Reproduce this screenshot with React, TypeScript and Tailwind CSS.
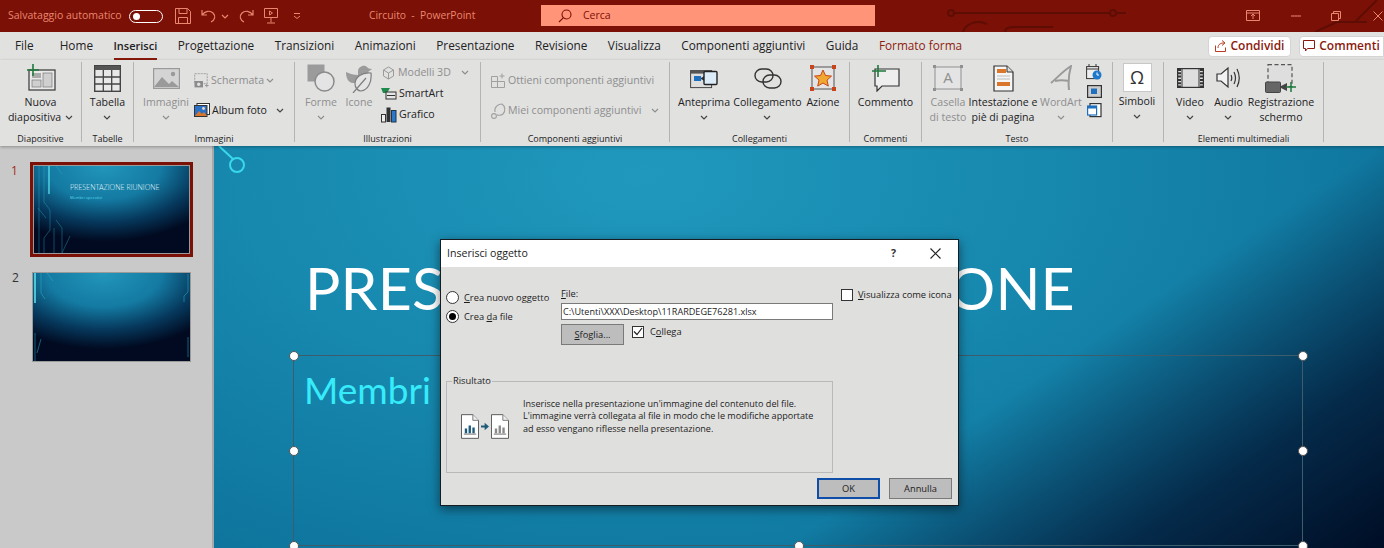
import type { ReactNode } from "react";

const tabs = ["Home", "Inserisci", "Progettazione", "Transizioni", "Animazioni", "Presentazione", "Revisione", "Visualizza", "Componenti aggiuntivi", "Guida"];

function Chevron({ className = "text-[#444]" }: { className?: string }) {
  return (
    <svg width="8" height="5" viewBox="0 0 8 5" className={className} fill="none" stroke="currentColor" strokeWidth="1.2">
      <path d="M1 1l3 3 3-3" />
    </svg>
  );
}

function NewSlideIcon() {
  return (
    <svg width="30" height="28" viewBox="0 0 30 28">
      <rect x="3" y="6" width="26" height="20" fill="#e9e9e9" stroke="#444" strokeWidth="1.3" />
      <rect x="6" y="9" width="9" height="5" fill="#aaa" />
      <rect x="17" y="9" width="9" height="14" fill="#cfcfcf" stroke="#777" strokeWidth=".7" />
      <rect x="6" y="16" width="9" height="7" fill="#cfcfcf" stroke="#777" strokeWidth=".7" />
      <path d="M7 0v12M1 6h12" stroke="#1f7a3d" strokeWidth="1.6" />
    </svg>
  );
}

function TableIcon() {
  return (
    <svg width="27" height="27" viewBox="0 0 27 27">
      <rect x=".7" y=".7" width="25.6" height="25.6" fill="#e8e8e8" stroke="#444" strokeWidth="1.4" />
      <rect x="1" y="1" width="25" height="4" fill="#555" />
      <path d="M9.3 5v21M17.7 5v21M1 12h25M1 19h25" stroke="#444" strokeWidth="1.3" />
    </svg>
  );
}

function PictureIcon() {
  return (
    <svg width="27" height="21" viewBox="0 0 27 21">
      <rect x=".6" y=".6" width="25.8" height="19.8" fill="#d4d4d4" stroke="#9a9a9a" strokeWidth="1.2" />
      <path d="M1 19l8-10 7 7 3-3 7 6z" fill="#9a9a9a" />
      <circle cx="20" cy="6" r="2.2" fill="#9a9a9a" />
    </svg>
  );
}

function ScreenshotIcon() {
  return (
    <svg width="15" height="15" viewBox="0 0 15 15" fill="none" className="shrink-0">
      <rect x=".7" y=".7" width="12.5" height="10" stroke="#a0a0a0" strokeDasharray="2 1" />
      <rect x=".5" y="8" width="8.5" height="6.4" fill="#8b8b8b" />
      <circle cx="4.7" cy="11.2" r="1.7" fill="#e0e0e0" />
      <path d="M11 12.5h3.6M12.8 10.7v3.6" stroke="#999" />
    </svg>
  );
}

function AlbumIcon() {
  return (
    <svg width="16" height="15" viewBox="0 0 16 15" className="shrink-0">
      <rect x="3" y=".5" width="12.5" height="11" fill="#fff" stroke="#333" />
      <rect x=".5" y="2.5" width="12.5" height="11" fill="#2a72c7" stroke="#333" />
      <path d="M1 13l4-5 3 3 2-2 3 4z" fill="#d9762c" />
      <circle cx="9.5" cy="5.5" r="1.4" fill="#f4d8c0" />
    </svg>
  );
}

function ShapesIcon() {
  return (
    <svg width="28" height="28" viewBox="0 0 28 28">
      <rect x=".5" y=".5" width="17" height="17" fill="#9b9b9b" />
      <circle cx="17.5" cy="17.5" r="9.5" fill="#e4e4e4" stroke="#8b8b8b" strokeWidth="1.5" />
    </svg>
  );
}

function IconsIcon() {
  return (
    <svg width="28" height="29" viewBox="0 0 28 29">
      <path d="M13 7c0-4 6-7 9-4 1 1 2 2 5 2l-4 3c0 5-2 8-5 9l-7 2H8C4 19 1 15 1 8c4 2 8 3 12 3z" fill="#9b9b9b" />
      <path d="M10 20c0-7 7-12 16-11 1 9-3 17-10 18-3 0-6-3-6-7zM8 29l13-15" fill="#e4e4e4" stroke="#7d7d7d" strokeWidth="1.2" />
    </svg>
  );
}

function CubeIcon() {
  return (
    <svg width="15" height="14" viewBox="0 0 13 14" fill="none" stroke="#9a9a9a" className="shrink-0">
      <path d="M6.5 1l5 3v6l-5 3-5-3V4zM1.5 4l5 3 5-3M6.5 7v6" />
    </svg>
  );
}

function SmartArtIcon() {
  return (
    <svg width="16" height="13" viewBox="0 0 16 13" className="shrink-0">
      <path d="M0 1h9l-3 5H2z" fill="#1f8a4c" />
      <rect x="5" y="5" width="10" height="7" fill="#e6e6e6" stroke="#333" />
      <path d="M6 8.5h8" stroke="#333" />
    </svg>
  );
}

function ChartIcon() {
  return (
    <svg width="16" height="16" viewBox="0 0 16 16" className="shrink-0">
      <rect x=".5" y="7.5" width="4" height="7.5" fill="#eee" stroke="#333" />
      <rect x="5.5" y=".5" width="4" height="14.5" fill="#333" />
      <rect x="10.5" y="3.5" width="4.5" height="11.5" fill="#2a78c9" stroke="#234" />
    </svg>
  );
}

function AddinsIcon() {
  return (
    <svg width="15" height="15" viewBox="0 0 15 15" fill="none" stroke="#a0a0a0" className="shrink-0">
      <path d="M.5 3.5h6v5h-6zM.5 8.5h6v6h-6zM6.5 8.5h7v6h-7zM11 .5v5M8.5 3h5" />
    </svg>
  );
}

function MyAddinsIcon() {
  return (
    <svg width="15" height="16" viewBox="0 0 15 16" fill="none" stroke="#a0a0a0" strokeWidth="1.1" className="shrink-0">
      <path d="M4 9c-1-5 3-8 7-8 3 2 4 7 1 10-2 2-5 1-6 1" />
      <circle cx="3" cy="13" r="2.4" />
    </svg>
  );
}

function PreviewIcon() {
  return (
    <svg width="28" height="21" viewBox="0 0 28 21">
      <rect x=".6" y="2.6" width="21" height="17" fill="#dedede" stroke="#444" />
      <rect x=".6" y="2.6" width="21" height="3" fill="#555" />
      <rect x="4" y="8" width="7" height="5" fill="#1f6fbf" />
      <path d="M11 10l5-3v7l-5-3z" fill="#333" />
      <rect x="14" y="3.5" width="13" height="13" rx="1" fill="#dcebf8" stroke="#222" strokeWidth="1.4" />
    </svg>
  );
}

function LinkIcon() {
  return (
    <svg width="28" height="21" viewBox="0 0 28 21" fill="none" stroke="#333" strokeWidth="1.4">
      <rect x="1" y="1" width="18" height="13" rx="6.5" />
      <rect x="9" y="7" width="18" height="13" rx="6.5" />
    </svg>
  );
}

function ActionIcon() {
  return (
    <svg width="26" height="26" viewBox="0 0 26 26">
      <rect x="2" y="2" width="22" height="22" fill="#e4e4e4" stroke="#555" />
      <path d="M13 5l2.5 5.5 6 .6-4.5 4 1.3 6L13 18l-5.3 3.1 1.3-6-4.5-4 6-.6z" fill="#f0a830" stroke="#c9441a" />
      <path d="M0 0h4v4H0zM22 0h4v4h-4zM0 22h4v4H0zM22 22h4v4h-4z" fill="#c9441a" />
    </svg>
  );
}

function CommentIcon() {
  return (
    <svg width="28" height="27" viewBox="0 0 28 27">
      <path d="M3 4h24v17H10l-5 5v-5H3z" fill="#eee" stroke="#333" strokeWidth="1.2" />
      <path d="M6 0v12M0 6h14" stroke="#1f7a3d" strokeWidth="1.6" />
    </svg>
  );
}

function TextBoxIcon() {
  return (
    <svg width="30" height="26" viewBox="0 0 30 26">
      <rect x="2" y="2" width="26" height="22" fill="#e4e4e4" stroke="#909090" />
      <text x="15" y="18" textAnchor="middle" fontSize="15" fill="#909090" fontFamily="Open Sans, sans-serif">A</text>
      <path d="M0 0h3v3H0zM27 0h3v3h-3zM0 23h3v3H0zM27 23h3v3h-3z" fill="#909090" />
    </svg>
  );
}

function HeaderIcon() {
  return (
    <svg width="21" height="27" viewBox="0 0 21 27">
      <path d="M1 1h13l6 6v19H1z" fill="#f5f5f5" stroke="#333" strokeWidth="1.2" />
      <path d="M14 1v6h6" fill="#ddd" stroke="#333" />
      <rect x="4" y="4" width="9" height="4" fill="#d9762c" />
      <rect x="4" y="17" width="13" height="4" fill="#d9762c" />
      <path d="M4 11h13M4 14h13" stroke="#bbb" />
    </svg>
  );
}

function WordArtIcon() {
  return (
    <svg width="22" height="26" viewBox="0 0 22 26" fill="none" stroke="#9a9a9a" strokeWidth="2">
      <path d="M1 18C7 13 13 6 21 1c-2 7-3 15-2 24M5 16c4-1 9-1 14 0" />
    </svg>
  );
}

function DateIcon() {
  return (
    <svg width="16" height="16" viewBox="0 0 16 16">
      <rect x=".6" y="2.6" width="12" height="12" fill="#eee" stroke="#333" />
      <path d="M1 5h12M3 0v3M10 0v3" stroke="#333" />
      <circle cx="11" cy="11" r="4.5" fill="#1f78c9" />
      <path d="M11 8.5V11h2" stroke="#fff" fill="none" />
    </svg>
  );
}

function NumberIcon() {
  return (
    <svg width="15" height="13" viewBox="0 0 15 13">
      <rect x=".6" y=".6" width="13.8" height="11.8" fill="#ccc" stroke="#333" strokeWidth="1.2" />
      <rect x="4" y="3.5" width="6" height="5.5" fill="#1f6fbf" />
    </svg>
  );
}

function ObjectIcon() {
  return (
    <svg width="15" height="15" viewBox="0 0 15 15">
      <rect x="3" y=".6" width="11" height="13" fill="#fff" stroke="#333" strokeWidth="1.2" />
      <rect x=".6" y="3" width="9" height="9" fill="#fff" stroke="#1f6fbf" strokeWidth="1.2" />
      <rect x=".6" y="3" width="9" height="2.5" fill="#1f6fbf" />
    </svg>
  );
}

function VideoIcon() {
  return (
    <svg width="27" height="20" viewBox="0 0 27 20">
      <rect x=".6" y=".6" width="25.8" height="18.8" fill="#dedede" stroke="#333" strokeWidth="1.2" />
      <path d="M2.5 1v18M24.5 1v18" stroke="#333" strokeWidth="3" strokeDasharray="2 1.3" />
      <path d="M5 1v18M22 1v18" stroke="#333" />
    </svg>
  );
}

function AudioIcon() {
  return (
    <svg width="26" height="24" viewBox="0 0 26 24" fill="none" stroke="#333" strokeWidth="1.2">
      <path d="M1 8v7h4l7 6V2L5 8z" fill="#f2f2f2" />
      <path d="M15 9c1 2 1 4 0 6M18 6c2 4 2 8 0 12M21 3c3 6 3 12 0 18" />
    </svg>
  );
}

function RecordIcon() {
  return (
    <svg width="32" height="29" viewBox="0 0 32 29">
      <rect x="3" y=".7" width="24" height="22" fill="#dedede" stroke="#555" strokeWidth="1.2" strokeDasharray="4 2.5" />
      <rect x=".5" y="18" width="15" height="10.5" rx="1" fill="#666" stroke="#444" />
      <path d="M16 22l6-3v8l-6-3z" fill="#444" />
      <path d="M26 18v10M21 23h10" stroke="#1f7a3d" strokeWidth="1.5" />
    </svg>
  );
}

function BigButton({ w, icon, lines, chevron, gray }: { w: number; icon: ReactNode; lines: string[]; chevron?: "inline" | "below"; gray?: boolean }) {
  return (
    <div style={{ width: w }} className={`flex shrink-0 flex-col items-center ${gray ? "text-[#8e8e8e]" : "text-[#222]"}`}>
      <div className="flex h-[32px] items-center justify-center">{icon}</div>
      <div className="mt-[1px] flex flex-col items-center whitespace-nowrap text-[10.6px] leading-[15px]">
        {lines.map((l, i) => (
          <span key={l} className="flex items-center gap-1">
            {l}
            {chevron === "inline" && i === lines.length - 1 && <Chevron />}
          </span>
        ))}
        {chevron === "below" && (
          <span className="flex h-[14px] items-center">
            <Chevron className={gray ? "text-[#8e8e8e]" : "text-[#444]"} />
          </span>
        )}
      </div>
    </div>
  );
}

function SmallRow({ icon, label, gray, chevron, className = "" }: { icon: ReactNode; label: string; gray?: boolean; chevron?: boolean; className?: string }) {
  return (
    <div className={`flex items-center gap-[2px] whitespace-nowrap text-[10.6px] ${gray ? "text-[#8e8e8e]" : "text-[#222]"} ${className}`}>
      {icon}
      <span>{label}</span>
      {chevron && (
        <span className="ml-auto flex items-center">
          <Chevron className={gray ? "text-[#8e8e8e]" : "text-[#444]"} />
        </span>
      )}
    </div>
  );
}

function Group({ w, label, children, className = "" }: { w: number; label?: string; children: ReactNode; className?: string }) {
  return (
    <div style={{ width: w }} className="flex h-[80px] shrink-0 flex-col border-r border-[#b4b4b4]">
      <div className={`flex h-[70px] shrink-0 items-start ${className}`}>{children}</div>
      <div className="h-[14px] shrink-0 whitespace-nowrap text-center text-[9px] leading-[14px] text-[#222]">{label}</div>
    </div>
  );
}

function Thumb({ className = "", children }: { className?: string; children?: ReactNode }) {
  return (
    <div className={`relative overflow-hidden bg-[radial-gradient(ellipse_88%_92%_at_45%_0%,#2296bb_0%,#147aa2_42%,#06385c_70%,#010a20_94%)] ${className}`}>
      {children}
    </div>
  );
}

function DocIcon({ dim }: { dim?: boolean }) {
  return (
    <svg width="18" height="25" viewBox="0 0 19 26" className="shrink-0">
      <path d="M.5.5h12l6 6v19H.5z" fill="#fff" stroke="#555" />
      <path d="M12.5.5v6h6" fill="#eee" stroke="#777" />
      <path d="M4 20v-5h2.5v5zM8 20v-8h2.5v8zM12 20v-6h2.5v6z" fill={dim ? "#8a8a8a" : "#1e5a7a"} />
      <path d="M3 21h13" stroke="#666" />
    </svg>
  );
}

function Handle({ className }: { className: string }) {
  return <div className={`absolute size-[10px] rounded-full border-[1.5px] border-[#555] bg-white ${className}`} />;
}

function Dialog() {
  return (
    <div className="absolute left-[440px] top-[239px] flex h-[267px] w-[519px] flex-col border border-[#151d22] bg-[#dfdfde] text-[9.3px] text-[#1c1c1c] shadow-[0_3px_10px_rgba(0,0,0,0.5)]">
      <div className="flex h-[27px] shrink-0 items-center bg-white pl-[6px] text-[10.6px]">
        <span>Inserisci oggetto</span>
        <span className="ml-auto mr-[34px] font-bold text-[#333]">?</span>
        <svg width="11" height="11" viewBox="0 0 11 11" className="mr-[17px]" stroke="#222" strokeWidth="1.1">
          <path d="M.5.5l10 10M10.5.5l-10 10" />
        </svg>
      </div>

      <div className="flex h-[108px] shrink-0 pl-[5px] pt-[20px]">
        <div className="flex w-[115px] shrink-0 flex-col gap-[6px] pt-[4px]">
          <label className="flex h-[13px] items-center gap-[5px] whitespace-nowrap">
            <span className="size-[13px] shrink-0 rounded-full border border-[#333] bg-white" />
            <span><u>C</u>rea nuovo oggetto</span>
          </label>
          <label className="flex h-[13px] items-center gap-[5px] whitespace-nowrap">
            <span className="flex size-[13px] shrink-0 items-center justify-center rounded-full border border-[#333] bg-white">
              <span className="size-[7px] rounded-full bg-black" />
            </span>
            <span>Crea <u>d</u>a file</span>
          </label>
        </div>
        <div className="flex w-[272px] shrink-0 flex-col">
          <span className="h-[13px] leading-[14px]"><u>F</u>ile:</span>
          <div className="mt-[3px] flex h-[17px] items-center whitespace-nowrap border border-[#7a7a7a] bg-white pl-[1px] text-[9.1px]">C:\Utenti\XXX\Desktop\11RARDEGE76281.xlsx</div>
          <div className="mt-[4px] flex items-start gap-[8px]">
            <button className="h-[21px] w-[63px] border border-[#7a7a7a] bg-[#bdbdbd]"><u>S</u>foglia...</button>
            <label className="flex items-center gap-[6px] pt-[1px]">
              <span className="flex size-[12px] items-center justify-center border border-[#333] bg-white">
                <svg width="10" height="9" viewBox="0 0 10 9" fill="none" stroke="#222" strokeWidth="1.2"><path d="M1 4.5l3 3 5-6.5" /></svg>
              </span>
              <span>C<u>o</u>llega</span>
            </label>
          </div>
        </div>
        <label className="ml-[8px] mt-[1px] flex h-[13px] items-center gap-[5px] whitespace-nowrap">
          <span className="size-[12px] shrink-0 border border-[#333] bg-white" />
          <span><u>V</u>isualizza come icona</span>
        </label>
      </div>

      <fieldset className="ml-[5px] h-[98px] w-[387px] shrink-0 border border-[#b9b9b9] pl-[14px]">
        <legend className="-ml-[9px] px-[1px] leading-[12px]">Risultato</legend>
        <div className="flex items-start pt-[11px]">
          <div className="mt-[16px] flex w-[62px] shrink-0 items-center gap-[2px]">
            <DocIcon />
            <svg width="8" height="9" viewBox="0 0 11 10" className="shrink-0"><path d="M0 3.5h5V0l6 5-6 5V6.5H0z" fill="#1e5a7a" /></svg>
            <DocIcon dim />
          </div>
          <p className="whitespace-nowrap text-[9.05px] leading-[12.3px]">
            Inserisce nella presentazione un'immagine del contenuto del file.
            <br />
            L'immagine verrà collegata al file in modo che le modifiche apportate
            <br />
            ad esso vengano riflesse nella presentazione.
          </p>
        </div>
      </fieldset>

      <div className="flex justify-end gap-[9px] pr-[6px] pt-[5px]">
        <button className="h-[21px] w-[63px] border-2 border-[#0f4ea8] bg-[#bdbdbd]">OK</button>
        <button className="h-[21px] w-[63px] border border-[#7a7a7a] bg-[#bdbdbd]">Annulla</button>
      </div>
    </div>
  );
}

export default function App() {
  return (
    <div className="relative flex h-[548px] w-[1384px] flex-col overflow-hidden bg-[#c9c9c9] font-['Open_Sans',sans-serif]">
      {/* title bar */}
      <div className="relative flex h-[32px] shrink-0 items-center bg-[#7b1006] text-[#e9876f]">
        <svg width="439" height="32" viewBox="0 0 439 32" className="absolute left-[945px] top-0" fill="none" stroke="#5e0d05" strokeWidth="2">
          <path d="M9 13h156M171 13h10M18 32c2-8 14-13 24-8M60 32c0-3 3-5 8-5h40M370 32l22-10h30M410 22L432 0" />
          <circle cx="6" cy="13" r="3" />
          <circle cx="168" cy="13" r="3" />
        </svg>
        <span className="ml-[8px] whitespace-nowrap text-[10.5px]">Salvataggio automatico</span>
        <div className="ml-[7px] flex h-[13px] w-[34px] items-center rounded-full border border-white pl-[3px]">
          <span className="size-[7px] rounded-full bg-white" />
        </div>
        <div className="ml-[12px] flex items-center text-[#e9876f]">
          <svg width="16" height="16" viewBox="0 0 16 16" fill="none" stroke="currentColor"><path d="M.5.5h12l3 3v12H.5zM4 .5v5h8v-5M3.5 15.5v-6h9v6" /></svg>
          <svg width="16" height="14" viewBox="0 0 16 14" className="ml-[10px]" fill="none" stroke="currentColor" strokeWidth="1.2"><path d="M1 1v5h5M1 6c3-4 8-5 11-2s2 7-2 9" /></svg>
          <span className="ml-[4px]"><Chevron className="text-[#e9876f]" /></span>
          <svg width="16" height="14" viewBox="0 0 16 14" className="ml-[9px]" fill="none" stroke="currentColor" strokeWidth="1.2"><path d="M15 1v5h-5M15 6c-3-4-8-5-11-2s-2 7 2 9" /></svg>
          <svg width="16" height="16" viewBox="0 0 16 16" className="ml-[9px]" fill="none" stroke="currentColor"><path d="M1.5.5h13v9h-13zM8 9.5v5M4 15h8M6.5 3v4l3-2z" /></svg>
          <svg width="8" height="6" viewBox="0 0 8 6" className="ml-[14px]" fill="none" stroke="currentColor"><path d="M1 .5h6M1 3l3 2.5L7 3" /></svg>
        </div>
        <span className="absolute left-[369px] whitespace-nowrap text-[10.3px]">Circuito&nbsp; -&nbsp; PowerPoint</span>
        <div className="absolute left-[541px] top-[5px] flex h-[21px] w-[334px] items-center bg-[#ff9478] text-[10.5px] text-[#7b1006]">
          <svg width="14" height="14" viewBox="0 0 14 14" className="ml-[17px]" fill="none" stroke="#7b1006" strokeWidth="1.1"><circle cx="8.5" cy="5.5" r="4.5" /><path d="M5.2 8.8L1 13" /></svg>
          <span className="ml-[11px]">Cerca</span>
        </div>
        <div className="absolute left-[1246px] top-[10px] flex items-center">
          <svg width="14" height="11" viewBox="0 0 14 11" fill="none" stroke="currentColor"><path d="M.5.5h13v10H.5zM.5 3h13M7 9V4.5M5 6l2-2 2 2" /></svg>
          <svg width="10" height="2" viewBox="0 0 10 2" className="ml-[31px]" stroke="currentColor"><path d="M0 1h10" /></svg>
          <svg width="10" height="10" viewBox="0 0 10 10" className="ml-[30px]" fill="none" stroke="currentColor"><path d="M.5 2.5h7v7h-7zM2.5 2.5v-2h7v7h-2" /></svg>
          <svg width="10" height="10" viewBox="0 0 10 10" className="ml-[32px]" stroke="currentColor"><path d="M.5.5l9 9M9.5.5l-9 9" /></svg>
        </div>
      </div>

      {/* tabs */}
      <div className="flex h-[28px] shrink-0 items-center bg-[#e1e1e0] pl-[15px] text-[11.8px] text-[#222]">
        <span className="mr-[26px]">File</span>
        <div className="flex items-center gap-[20.5px]">
          {tabs.map((t) => (
            <span key={t} className={`relative whitespace-nowrap ${t === "Inserisci" ? "text-[11px] font-semibold" : ""}`}>
              {t}
              {t === "Inserisci" && <span className="absolute -bottom-[6px] left-0 right-0 h-[2px] bg-[#8a1a0c]" />}
            </span>
          ))}
          <span className="whitespace-nowrap text-[#8f1d0e]">Formato forma</span>
        </div>
        <div className="ml-auto flex gap-[8px] text-[12px] font-semibold text-[#8a1a0c]">
          <div className="flex h-[21px] w-[83px] items-center justify-center gap-[4px] rounded-sm border border-[#d4d4d4] bg-white">
            <svg width="12" height="12" viewBox="0 0 12 12" fill="none" stroke="#b93c22"><path d="M.5 5.5v6h10v-4M3 8c0-4 3-5 6-5M7 .5l3 2.5-3 2.5" /></svg>
            Condividi
          </div>
          <div className="flex h-[21px] w-[85px] items-center justify-center gap-[4px] rounded-l-sm border border-[#d4d4d4] bg-white">
            <svg width="12" height="12" viewBox="0 0 12 12" fill="none" stroke="#8a1a0c"><path d="M.5.5h11v8H4.5l-2 2.5V8.5h-2z" /></svg>
            Commenti
          </div>
        </div>
      </div>

      {/* ribbon */}
      <div className="z-10 flex h-[86px] shrink-0 bg-[#e1e1e0] pt-[2px] shadow-[0_1px_3px_rgba(0,0,0,0.3)]">
        <Group w={82} label="Diapositive">
          <BigButton w={81} icon={<NewSlideIcon />} lines={["Nuova", "diapositiva"]} chevron="inline" />
        </Group>
        <Group w={52} label="Tabelle">
          <BigButton w={51} icon={<TableIcon />} lines={["Tabella"]} chevron="below" />
        </Group>
        <Group w={161} label="Immagini" className="pl-[4px]">
          <BigButton w={56} gray icon={<PictureIcon />} lines={["Immagini"]} chevron="below" />
          <div className="flex w-[90px] flex-col gap-[14px] pt-[11px]">
            <SmallRow gray icon={<ScreenshotIcon />} label="Schermata" className="w-[78px]" chevron />
            <SmallRow icon={<AlbumIcon />} label="Album foto" chevron />
          </div>
        </Group>
        <Group w={186} label="Illustrazioni" className="pl-[7px]">
          <BigButton w={38} gray icon={<ShapesIcon />} lines={["Forme"]} chevron="below" />
          <BigButton w={38} gray icon={<IconsIcon />} lines={["Icone"]} />
          <div className="ml-[3px] flex w-[88px] flex-col gap-[5px] pt-[3px]">
            <SmallRow gray icon={<CubeIcon />} label="Modelli 3D" chevron />
            <SmallRow icon={<SmartArtIcon />} label="SmartArt" />
            <SmallRow icon={<ChartIcon />} label="Grafico" />
          </div>
        </Group>
        <Group w={189} label="Componenti aggiuntivi" className="pl-[10px]">
          <div className="flex w-[168px] flex-col gap-[14px] pt-[11px]">
            <SmallRow gray icon={<AddinsIcon />} label="Ottieni componenti aggiuntivi" />
            <SmallRow gray icon={<MyAddinsIcon />} label="Miei componenti aggiuntivi" chevron />
          </div>
        </Group>
        <Group w={180} label="Collegamenti" className="pl-[6px]">
          <BigButton w={56} icon={<PreviewIcon />} lines={["Anteprima"]} chevron="below" />
          <BigButton w={71} icon={<LinkIcon />} lines={["Collegamento"]} chevron="below" />
          <BigButton w={40} icon={<ActionIcon />} lines={["Azione"]} />
        </Group>
        <Group w={72} label="Commenti">
          <BigButton w={71} icon={<CommentIcon />} lines={["Commento"]} />
        </Group>
        <Group w={191} label="Testo" className="pl-[7px]">
          <BigButton w={38} gray icon={<TextBoxIcon />} lines={["Casella", "di testo"]} />
          <BigButton w={72} icon={<HeaderIcon />} lines={["Intestazione e", "piè di pagina"]} />
          <BigButton w={44} gray icon={<WordArtIcon />} lines={["WordArt"]} chevron="below" />
          <div className="ml-[3px] flex flex-col items-center gap-[5px] pt-[2px]">
            <DateIcon />
            <NumberIcon />
            <ObjectIcon />
          </div>
        </Group>
        <Group w={51} className="pl-[9px]">
          <div className="flex w-[30px] flex-col items-center">
            <div className="mt-[1px] flex size-[29px] items-center justify-center border border-[#c8c8c8] bg-white text-[18px] text-[#333]">Ω</div>
            <span className="mt-[2px] text-[10.6px] leading-[15px] text-[#222]">Simboli</span>
            <span className="flex h-[14px] items-center"><Chevron /></span>
          </div>
        </Group>
        <Group w={160} label="Elementi multimediali" className="pl-[6px]">
          <BigButton w={40} icon={<VideoIcon />} lines={["Video"]} chevron="below" />
          <BigButton w={37} icon={<AudioIcon />} lines={["Audio"]} chevron="below" />
          <BigButton w={68} icon={<RecordIcon />} lines={["Registrazione", "schermo"]} />
        </Group>
      </div>

      {/* work area */}
      <div className="flex min-h-0 flex-1">
        <aside className="flex w-[212px] shrink-0 flex-col gap-[15px] pl-[30px] pt-[16px]">
          <div className="relative w-[163px] border-[3px] border-[#7b1006]">
            <span className="absolute -left-[22px] -top-[3px] text-[12px] text-[#a52a14]">1</span>
            <Thumb className="h-[89px] border border-[#9a9a9a]">
              <svg width="60" height="87" viewBox="0 0 60 87" className="absolute left-0 top-0" fill="none" stroke="#2bb6d0" strokeWidth=".5" opacity=".75">
                <path d="M5 0v87M10 0v36l6 8v20l-6 8v15M22 0l6 8M4 42l8 10M28 87V62l-6-8M36 70l-8 17M20 62v25" />
              </svg>
              <svg width="20" height="30" viewBox="0 0 20 30" className="absolute left-0 top-0" fill="none" stroke="#5fe8f2" strokeWidth="1.2">
                <path d="M15 0v28" />
              </svg>
              <span className="absolute left-[36px] top-[16px] whitespace-nowrap font-['Lato',sans-serif] text-[7px] font-light text-[#e4f6fa]">PRESENTAZIONE RIUNIONE</span>
              <span className="absolute left-[36px] top-[29px] whitespace-nowrap text-[4px] text-[#57d8e8]">Membri operativi</span>
            </Thumb>
          </div>
          <div className="relative ml-[2px] w-[159px] border border-[#9a9a9a]">
            <span className="absolute -left-[21px] -top-[4px] text-[12px] text-[#333]">2</span>
            <Thumb className="h-[88px]">
              <svg width="158" height="88" viewBox="0 0 158 88" className="absolute left-0 top-0" fill="none" stroke="#2bb6d0" strokeWidth=".5">
                <path d="M2 0v30" stroke="#5fe8f2" strokeWidth="1.5" />
                <path d="M8 0v20l4 6M2 60v28M8 66l-4 14M155 1v18l-4 4v6M155 64v20M14 0l6 8" />
              </svg>
            </Thumb>
          </div>
        </aside>
        <main className="relative min-w-0 flex-1 overflow-hidden border-l-2 border-[#a8a8a8] bg-[linear-gradient(146deg,transparent_66%,rgba(3,30,60,0.45)_76%,rgba(3,30,60,0.85)_85%,#000d25_100%),radial-gradient(ellipse_900px_500px_at_430px_30px,#2098bd_0%,#1788ae_45%,#0c6f98_100%)]">
          <svg width="40" height="32" viewBox="0 0 40 32" className="absolute left-0 top-0" fill="none" stroke="#39d8ea" strokeWidth="2">
            <path d="M5 0l14 13" />
            <circle cx="23" cy="19" r="7" />
          </svg>
          <span className="absolute left-[91px] top-[107px] whitespace-nowrap font-['Lato',sans-serif] text-[59px] font-normal leading-[70px] tracking-[0.15px] text-white">PRESENTAZIONE RIUNIONE</span>
          <span className="absolute left-[90px] top-[222px] whitespace-nowrap font-['Lato',sans-serif] text-[37px] leading-[44px] text-[#36ecfb]">Membri operativi</span>
          <div className="absolute left-[79px] top-[209px] h-[191px] w-[1010px] border border-[#3d5d6d]" />
          <Handle className="left-[75px] top-[205px]" />
          <Handle className="left-[1084px] top-[205px]" />
          <Handle className="left-[75px] top-[300px]" />
          <Handle className="left-[1084px] top-[300px]" />
          <Handle className="left-[75px] top-[395px]" />
          <Handle className="left-[580px] top-[395px]" />
          <Handle className="left-[1084px] top-[395px]" />
        </main>
      </div>

      <Dialog />
    </div>
  );
}
